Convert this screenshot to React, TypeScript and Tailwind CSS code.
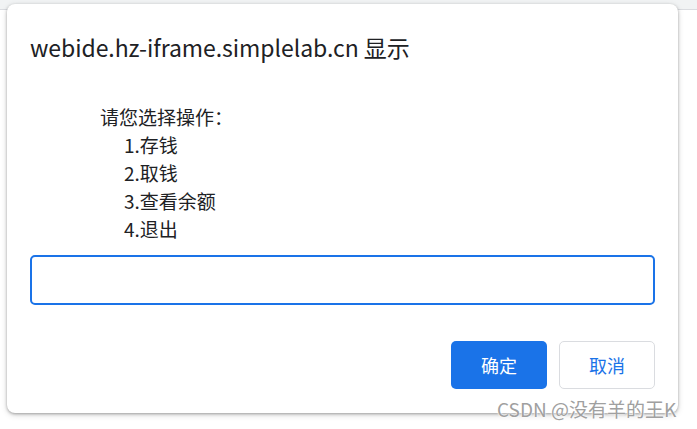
export default function App() {
  const items = ["1.存钱", "2.取钱", "3.查看余额", "4.退出"];

  return (
    <div
      className="relative h-[429px] w-[697px] overflow-hidden bg-white"
      style={{ fontFamily: '"Noto Sans CJK SC", "Noto Sans", sans-serif' }}
    >
      <div className="h-[10px] border-b border-[#dadce0] bg-[#f1f3f4]" />

      <div className="absolute left-[7px] top-[4px] flex h-[409px] w-[671px] flex-col rounded-[8px] bg-white px-[23px] shadow-[0_1px_3px_rgba(0,0,0,0.3),0_2px_6px_rgba(0,0,0,0.15)]">
        <h1 className="mt-[28px] text-[23px] leading-[30px] tracking-[-0.05px] text-[#202124]">
          webide.hz-iframe.simplelab.cn 显示
        </h1>

        <div className="mt-[41px] pl-[70px] text-[19px] leading-[28px] text-[#202124]">
          <div>请您选择操作：</div>
          {items.map((item) => (
            <div key={item} className="pl-[24px]">
              {item}
            </div>
          ))}
        </div>

        <input
          type="text"
          className="mt-[12px] h-[50px] w-[625px] rounded-[5px] border-2 border-[#1a73e8] px-3 outline-none"
        />

        <div className="mt-[36px] flex justify-end gap-[12px]">
          <button className="h-[48px] w-[96px] rounded-[5px] bg-[#1a73e8] text-[18px] text-white">
            确定
          </button>
          <button className="h-[48px] w-[96px] rounded-[5px] border border-[#dadce0] bg-white text-[18px] text-[#1a73e8]">
            取消
          </button>
        </div>
      </div>

      <div
        className="absolute left-[497px] top-[397px] text-[19px] leading-[24px] text-[#a0a0a0]"
        style={{ textShadow: "0 0 2px #fff, 0 0 2px #fff" }}
      >
        CSDN @没有羊的王K
      </div>
    </div>
  );
}
